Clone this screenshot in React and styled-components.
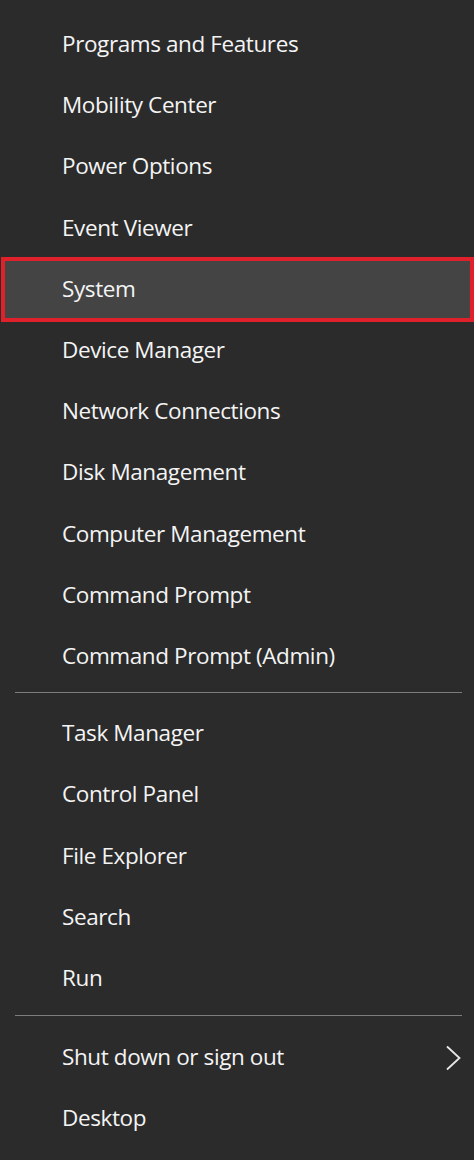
import React from 'react';
import styled, { createGlobalStyle } from 'styled-components';

const GlobalStyle = createGlobalStyle`
  html, body {
    margin: 0;
    padding: 0;
    background: #2b2b2b;
  }
`;

const Menu = styled.nav`
  width: 474px;
  height: 1160px;
  box-sizing: border-box;
  padding-top: 14px;
  background: #2b2b2b;
  font-family: "Open Sans", "Noto Sans", sans-serif;
  display: flex;
  flex-direction: column;
`;

const Item = styled.div`
  height: 61.2px;
  flex: none;
  display: flex;
  align-items: center;
  padding-right: 12px;
  box-sizing: border-box;
  color: #f4f4f4;
  font-size: 22.5px;
  letter-spacing: -0.4px;
  background: ${p => (p.$active ? '#444444' : 'transparent')};
  outline: ${p => (p.$active ? '4px solid #e0202b' : 'none')};
  outline-offset: -2px;
  margin: ${p => (p.$active ? '0 2px 0 3px' : '0')};
  padding-left: ${p => (p.$active ? '59px' : '62px')};
`;

const Label = styled.span`
  flex: 1;
  margin-top: -2px;
`;

const Divider = styled.hr`
  border: none;
  height: 1px;
  background: #7d7d7d;
  margin: ${p => p.$top}px 12px ${p => p.$bottom}px 15px;
  flex: none;
`;

const Chevron = () => (
  <svg width="17" height="26" viewBox="0 0 17 26" fill="none">
    <path d="M2 1.5 L14.5 13 L2 24.5" stroke="#e8e8e8" strokeWidth="1.8" />
  </svg>
);

const groups = [
  [
    'Programs and Features',
    'Mobility Center',
    'Power Options',
    'Event Viewer',
    'System',
    'Device Manager',
    'Network Connections',
    'Disk Management',
    'Computer Management',
    'Command Prompt',
    'Command Prompt (Admin)',
  ],
  ['Task Manager', 'Control Panel', 'File Explorer', 'Search', 'Run'],
  ['Shut down or sign out', 'Desktop'],
];

export default function App() {
  return (
    <>
      <GlobalStyle />
      <Menu>
        {groups.map((items, gi) => (
          <React.Fragment key={gi}>
            {gi === 1 && <Divider $top={5} $bottom={10} />}
            {gi === 2 && <Divider $top={6} $bottom={11} />}
            {items.map(name => (
              <Item key={name} $active={name === 'System'}>
                <Label>{name}</Label>
                {name === 'Shut down or sign out' && <Chevron />}
              </Item>
            ))}
          </React.Fragment>
        ))}
      </Menu>
    </>
  );
}
